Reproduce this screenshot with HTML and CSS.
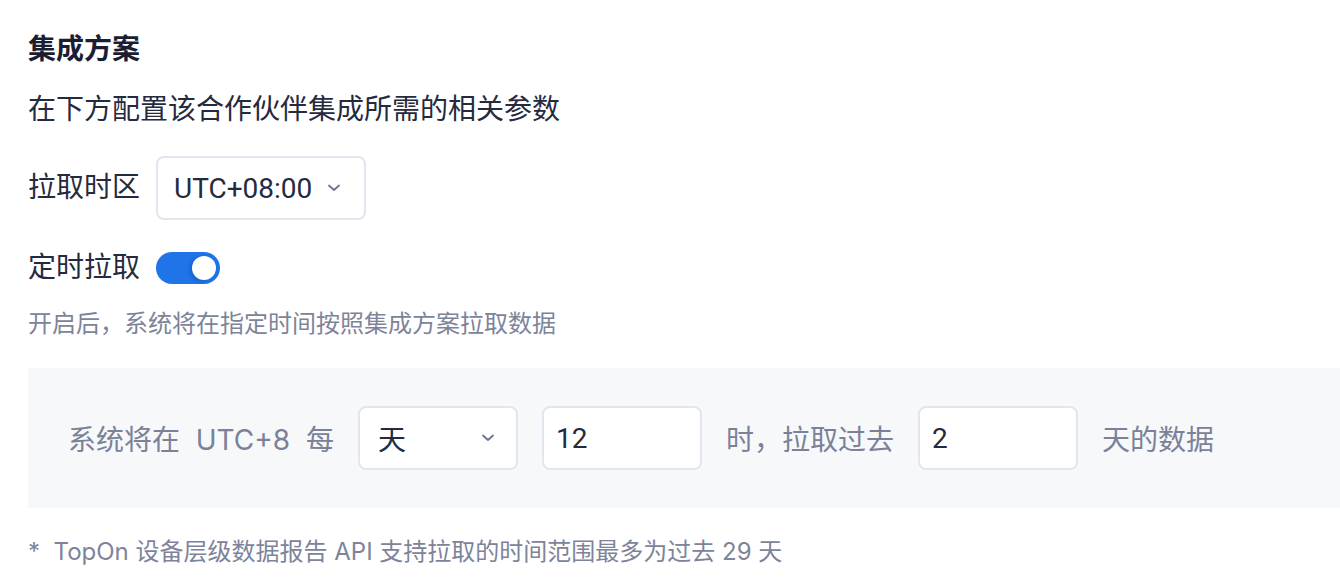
FILE: index.html
```html
<!DOCTYPE html>
<html lang="zh-CN">
<head>
  <meta charset="UTF-8">
  <meta name="viewport" content="width=device-width, initial-scale=1.0">
  <title>集成方案</title>
  <link rel="stylesheet" href="styles.css">
</head>
<body>
  <main class="plan">
    <h2 class="plan-title">集成方案</h2>
    <p class="plan-desc">在下方配置该合作伙伴集成所需的相关参数</p>

    <div class="field">
      <span class="field-label">拉取时区</span>
      <div class="select select-zone">
        <span>UTC+08:00</span>
        <svg class="chevron" viewBox="0 0 12 8" width="12" height="8"><path d="M1 1.5 L6 6 L11 1.5"/></svg>
      </div>
    </div>

    <div class="field field-switch">
      <span class="field-label">定时拉取</span>
      <div class="switch on"><span class="switch-knob"></span></div>
    </div>

    <p class="hint">开启后，系统将在指定时间按照集成方案拉取数据</p>

    <div class="schedule">
      <span>系统将在&nbsp; UTC+8&nbsp; 每</span>
      <div class="select select-unit">
        <span>天</span>
        <svg class="chevron" viewBox="0 0 12 8" width="12" height="8"><path d="M1 1.5 L6 6 L11 1.5"/></svg>
      </div>
      <input class="num" type="text" value="12">
      <span>时，拉取过去</span>
      <input class="num" type="text" value="2">
      <span>天的数据</span>
    </div>

    <p class="note">*&nbsp; TopOn 设备层级数据报告 API 支持拉取的时间范围最多为过去 29 天</p>
  </main>
</body>
</html>
```

FILE: styles.css
```css
body {
  margin: 0;
  padding: 0;
  background: #fff;
  font-family: Roboto, "Noto Sans CJK SC", sans-serif;
  color: #252a3f;
}

.plan {
  padding: 30px 0 0 28px;
}

.plan-title {
  margin: 0;
  font-size: 28px;
  line-height: 40px;
  font-weight: 700;
  color: #1b1e33;
}

.plan-desc {
  margin: 20px 0 0;
  font-size: 28px;
  line-height: 40px;
}

.field {
  display: flex;
  align-items: center;
  gap: 16px;
  margin-top: 26px;
}

.field-label {
  font-size: 28px;
  line-height: 40px;
}

.field-switch {
  margin-top: 28px;
}

.select {
  box-sizing: border-box;
  display: flex;
  align-items: center;
  justify-content: space-between;
  height: 64px;
  background: #fff;
  border: 2px solid #e3e6ee;
  border-radius: 8px;
  font-size: 28px;
  color: #252a3f;
}

.select-zone {
  width: 210px;
  padding: 0 24px 0 16px;
}

.select-unit {
  width: 160px;
  padding: 0 22px 0 18px;
}

.chevron {
  fill: none;
  stroke: #6b7390;
  stroke-width: 1.8;
  stroke-linecap: round;
  stroke-linejoin: round;
}

.switch {
  position: relative;
  width: 64px;
  height: 32px;
  border-radius: 16px;
  background: #1f74e8;
}

.switch-knob {
  position: absolute;
  top: 4px;
  right: 4px;
  width: 24px;
  height: 24px;
  border-radius: 50%;
  background: #fff;
  box-shadow: -2px 1px 4px rgba(0, 30, 90, 0.25);
}

.hint {
  margin: 20px 0 0;
  font-size: 24px;
  line-height: 32px;
  color: #7d8499;
}

.schedule {
  display: flex;
  align-items: center;
  gap: 24px;
  margin-top: 28px;
  height: 140px;
  padding-left: 40px;
  background: #f7f8fa;
  font-family: Inter, "Noto Sans CJK SC", sans-serif;
  font-size: 28px;
  color: #7a8198;
}

.num {
  box-sizing: border-box;
  width: 160px;
  height: 64px;
  padding: 0 12px;
  background: #fff;
  border: 2px solid #e3e6ee;
  border-radius: 8px;
  font-family: Roboto, "Noto Sans CJK SC", sans-serif;
  font-size: 28px;
  color: #252a3f;
  outline: none;
}

.note {
  margin: 28px 0 0;
  font-family: Inter, "Noto Sans CJK SC", sans-serif;
  font-size: 24px;
  line-height: 32px;
  color: #7d8499;
}
```
